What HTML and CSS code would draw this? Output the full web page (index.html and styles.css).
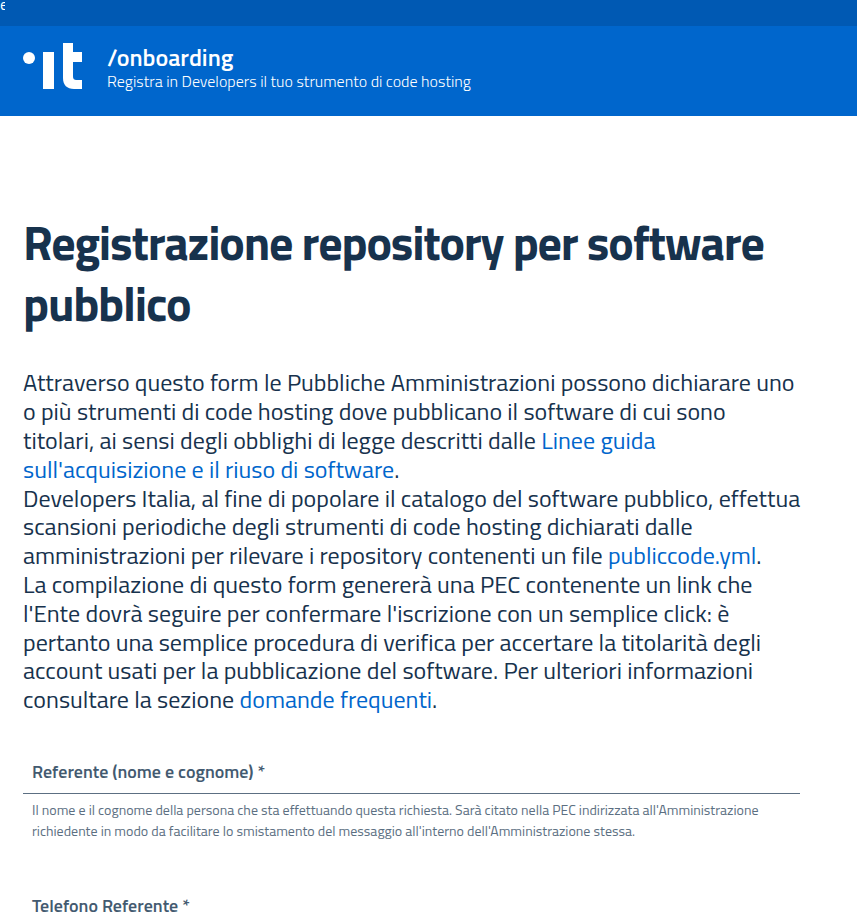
FILE: index.html
```html
<!DOCTYPE html>
<html lang="it">
<head>
    <meta charset="UTF-8">
    <title>Onboarding</title>
    <link rel="stylesheet" href="styles.css">
</head>
<body>

<div class="skip">
    <a href="#main">e</a>
</div>

<header class="brand-bar">
    <svg class="logo" width="60" height="48" viewBox="0 0 60 48">
        <circle cx="6" cy="15" r="6" fill="#fff"/>
        <rect x="20" y="9" width="11" height="37" fill="#fff"/>
        <path d="M40 0h10v9h9v10h-9v14c0 3 1 4 4 4h5v9h-8c-7 0-11-4-11-11z" fill="#fff"/>
    </svg>
    <div class="brand-text">
        <div class="brand-title">/onboarding</div>
        <div class="brand-sub">Registra in Developers il tuo strumento di code hosting</div>
    </div>
</header>

<main class="content" id="main">
    <h1>Registrazione repository per software pubblico</h1>

    <p class="intro">
        Attraverso questo form le Pubbliche Amministrazioni possono dichiarare uno o più strumenti di code hosting dove pubblicano il software di cui sono titolari, ai sensi degli obblighi di legge descritti dalle <a href="#">Linee guida sull'acquisizione e il riuso di software</a>.<br>
        Developers Italia, al fine di popolare il catalogo del software pubblico, effettua scansioni periodiche degli strumenti di code hosting dichiarati dalle amministrazioni per rilevare i repository contenenti un file <a href="#">publiccode.yml</a>.<br>
        La compilazione di questo form genererà una PEC contenente un link che l'Ente dovrà seguire per confermare l'iscrizione con un semplice click: è pertanto una semplice procedura di verifica per accertare la titolarità degli account usati per la pubblicazione del software. Per ulteriori informazioni consultare la sezione <a href="#">domande frequenti</a>.
    </p>

    <form class="form">
        <div class="field">
            <label for="referente">Referente (nome e cognome) *</label>
            <input type="text" id="referente">
            <small>Il nome e il cognome della persona che sta effettuando questa richiesta. Sarà citato nella PEC indirizzata all'Amministrazione richiedente in modo da facilitare lo smistamento del messaggio all'interno dell'Amministrazione stessa.</small>
        </div>
        <div class="field">
            <label for="telefono">Telefono Referente *</label>
            <input type="text" id="telefono">
        </div>
    </form>
</main>

</body>
</html>
```

FILE: styles.css
```css
html, body {
    height: 914px;
    overflow: hidden;
}

body {
    margin: 0;
    font-family: "Titillium Web", "Open Sans", "Noto Sans", sans-serif;
    color: #17324d;
    background: #fff;
}

a {
    color: #0066cc;
    text-decoration: none;
}

.skip {
    height: 26px;
    background: #0059b3;
    font-size: 16px;
    line-height: 8px;
}

.skip a {
    display: block;
    width: 5px;
    height: 10px;
    overflow: hidden;
    color: #fff;
    text-decoration: underline;
}

.brand-bar {
    display: flex;
    align-items: flex-start;
    gap: 24px;
    height: 90px;
    padding: 15px 0 0 23px;
    background: #0066cc;
    color: #fff;
    box-sizing: border-box;
}

.logo {
    margin-top: 2px;
}

.brand-title {
    font-size: 24px;
    font-weight: 600;
    line-height: 32px;
}

.brand-sub {
    font-size: 16px;
    font-weight: 300;
    line-height: 16px;
}

.content {
    width: 777px;
    margin-left: 23px;
}

h1 {
    margin: 96px 0 34.4px;
    font-size: 48px;
    line-height: 61px;
    font-weight: 700;
    letter-spacing: -1.22px;
}

.intro {
    margin: 0 -2px 45.6px 0;
    font-size: 24px;
    line-height: 28.8px;
}

.field {
    margin-bottom: 53px;
}

.field label {
    display: block;
    padding: 0 9px;
    font-size: 18px;
    font-weight: 600;
    line-height: 24px;
    color: #435a70;
}

.field input {
    display: block;
    width: 100%;
    height: 10px;
    border: none;
    border-bottom: 1px solid #5c6f82;
    box-sizing: border-box;
}

.field small {
    display: block;
    padding: 5px 9px 0;
    font-size: 14px;
    line-height: 21px;
    color: #5c6f82;
}
```
